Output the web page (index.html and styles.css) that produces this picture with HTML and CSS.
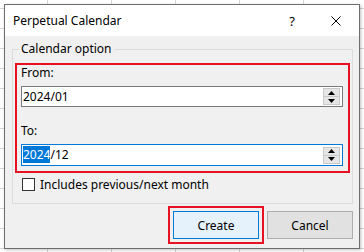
FILE: index.html
```html
<!DOCTYPE html>
<html lang="en">
<head>
  <meta charset="UTF-8" />
  <title>Perpetual Calendar</title>
  <link rel="stylesheet" href="styles.css">
</head>
<body>

<div class="dialog">
  <div class="titlebar">
    <span class="title">Perpetual Calendar</span>
    <span class="help">?</span>
    <span class="close">
      <svg width="10" height="10" viewBox="0 0 10 10"><path d="M0.5 0.5 L9.5 9.5 M9.5 0.5 L0.5 9.5" stroke="#000" stroke-width="1" fill="none"/></svg>
    </span>
  </div>

  <div class="content">
    <!-- Calendar option group -->
    <div class="group">
      <span class="group-label">Calendar option</span>

      <div class="range">
        <div class="field-label">From:</div>
        <div class="spin-input">
          <span class="value">2024/01</span>
          <span class="spinner">
            <span class="spin-btn"><svg width="7" height="4" viewBox="0 0 7 4"><path d="M3.5 0 L7 4 L0 4 Z" fill="#000"/></svg></span>
            <span class="spin-btn"><svg width="7" height="4" viewBox="0 0 7 4"><path d="M0 0 L7 0 L3.5 4 Z" fill="#000"/></svg></span>
          </span>
        </div>

        <div class="field-label to">To:</div>
        <div class="spin-input focused">
          <span class="value"><span class="sel">2024</span>/12</span>
          <span class="spinner">
            <span class="spin-btn"><svg width="7" height="4" viewBox="0 0 7 4"><path d="M3.5 0 L7 4 L0 4 Z" fill="#000"/></svg></span>
            <span class="spin-btn"><svg width="7" height="4" viewBox="0 0 7 4"><path d="M0 0 L7 0 L3.5 4 Z" fill="#000"/></svg></span>
          </span>
        </div>
      </div>

      <label class="check"><span class="box"></span>Includes previous/next month</label>
    </div>

    <div class="buttons">
      <div class="highlight"><button class="btn primary">Create</button></div>
      <button class="btn">Cancel</button>
    </div>
  </div>
</div>

</body>
</html>
```

FILE: styles.css
```css
html, body {
  margin: 0;
  height: 100%;
  overflow: hidden;
}

body {
  font-family: "Noto Sans", "Open Sans", sans-serif;
  font-size: 12px;
  color: #000;
  background-color: #fff;
  background-image:
    linear-gradient(to right, #d6d6d6 1px, transparent 1px),
    linear-gradient(to bottom, #d6d6d6 1px, transparent 1px);
  background-size: 64px 20px;
  background-position: 47px 8px;
  padding-top: 4px;
  box-sizing: border-box;
}

.dialog {
  margin-left: 4px;
  width: 356px;
  height: 245px;
  box-sizing: border-box;
  border: 1px solid #6e6e6e;
  background: #f0f0f0;
  box-shadow: 1px 1px 3px rgba(0,0,0,0.25);
}

.titlebar {
  height: 31px;
  background: #fff;
  display: flex;
  align-items: center;
  padding-left: 8px;
}

.title {
  flex: 1;
}

.help {
  font-size: 13px;
  margin-right: 36px;
}

.close {
  display: flex;
  margin-right: 18px;
}

.content {
  padding: 13px 6px 0 7px;
}

.group {
  position: relative;
  border: 1px solid #dcdcdc;
  padding: 13px 2px 12px 2px;
}

.group-label {
  position: absolute;
  top: -9px;
  left: 6px;
  padding: 0 2px;
  background: #f0f0f0;
  line-height: 16px;
}

.range {
  border: 2px solid #e81123;
  padding: 0 5px 5px 4px;
}

.field-label {
  line-height: 16px;
}

.field-label.to {
  margin-top: 16px;
}

.spin-input {
  margin-top: 5px;
  height: 21px;
  box-sizing: border-box;
  border: 1px solid #7a7a7a;
  background: #fff;
  display: flex;
  align-items: center;
  padding-left: 1px;
}

.spin-input.focused {
  height: 22px;
  border-color: #0078d7;
}

.value {
  flex: 1;
  line-height: 16px;
}

.sel {
  background: #0078d7;
  color: #fff;
}

.spinner {
  display: flex;
  flex-direction: column;
  margin-right: 2px;
}

.spin-btn {
  width: 15px;
  height: 7px;
  background: #e6e6e6;
  border: 1px solid #c9c9c9;
  display: flex;
  align-items: center;
  justify-content: center;
}

.spin-btn + .spin-btn {
  border-top: none;
}

.check {
  display: flex;
  align-items: center;
  margin-top: 5px;
  height: 13px;
  padding-left: 7px;
}

.box {
  width: 13px;
  height: 13px;
  box-sizing: border-box;
  border: 1px solid #333;
  background: #fff;
  margin-right: 5px;
}

.buttons {
  display: flex;
  justify-content: flex-end;
  align-items: center;
  gap: 3px;
  margin-top: 2px;
}

.highlight {
  border: 2px solid #e81123;
  padding: 3px;
  display: flex;
}

.btn {
  width: 86px;
  height: 28px;
  box-sizing: border-box;
  font-family: inherit;
  font-size: 12px;
  background: #e1e1e1;
  border: 1px solid #adadad;
  padding: 0;
  color: #000;
}

.btn.primary {
  background: #e5f1fb;
  border: 1px solid #0078d7;
}
```
